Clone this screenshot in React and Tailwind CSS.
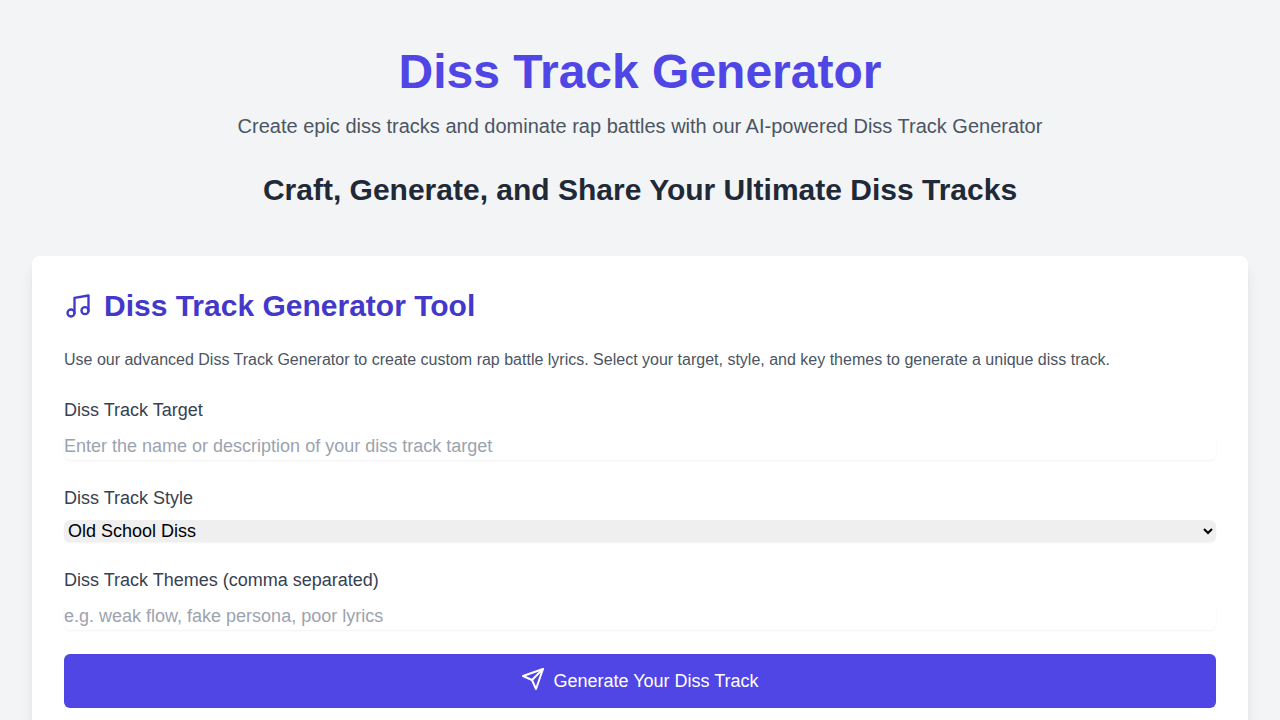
import { FiMusic, FiSend } from 'react-icons/fi';

const labelClass = 'block text-lg font-medium text-[#374151] mb-2';
const inputClass =
  'block w-full text-lg leading-7 rounded-md shadow-xs bg-transparent text-gray-900 placeholder:text-[#9ca3af] outline-none';

export default function App() {
  return (
    <div className="min-h-screen bg-[#f3f4f6] px-8 py-12 font-['Liberation_Sans',Arial,sans-serif]">
      <header className="text-center mb-12">
        <h1 className="text-5xl font-bold text-[#4f46e5] mb-4">Diss Track Generator</h1>
        <p className="text-xl text-[#4b5563] mb-8">
          Create epic diss tracks and dominate rap battles with our AI-powered Diss Track Generator
        </p>
        <h2 className="text-3xl font-bold text-[#1f2937]">
          Craft, Generate, and Share Your Ultimate Diss Tracks
        </h2>
      </header>
      <main className="bg-white rounded-lg shadow-lg p-8">
        <h2 className="flex items-center text-3xl font-bold text-[#4338ca] mb-6">
          <FiMusic className="mr-3 size-7" />
          Diss Track Generator Tool
        </h2>
        <p className="text-base text-[#4b5563] mb-6">
          Use our advanced Diss Track Generator to create custom rap battle lyrics. Select your target, style, and key
          themes to generate a unique diss track.
        </p>
        <form className="space-y-6" onSubmit={(e) => e.preventDefault()}>
          <div>
            <label htmlFor="target" className={labelClass}>Diss Track Target</label>
            <input
              id="target"
              type="text"
              placeholder="Enter the name or description of your diss track target"
              className={inputClass}
            />
          </div>
          <div>
            <label htmlFor="style" className={labelClass}>Diss Track Style</label>
            <select
              id="style"
              className="block w-full text-lg leading-7 rounded-md shadow-xs bg-[#efefef] text-black"
            >
              <option>Old School Diss</option>
              <option>Modern Diss</option>
              <option>Battle Rap</option>
            </select>
          </div>
          <div>
            <label htmlFor="themes" className={labelClass}>Diss Track Themes (comma separated)</label>
            <input
              id="themes"
              type="text"
              placeholder="e.g. weak flow, fake persona, poor lyrics"
              className={inputClass}
            />
          </div>
          <button
            type="submit"
            className="block w-full rounded-md bg-[#4f46e5] px-6 py-[13px] text-center text-lg font-medium text-white"
          >
            <FiSend className="mr-2 inline-block size-6 align-[-4px]" />
            Generate Your Diss Track
          </button>
        </form>
      </main>
    </div>
  );
}
